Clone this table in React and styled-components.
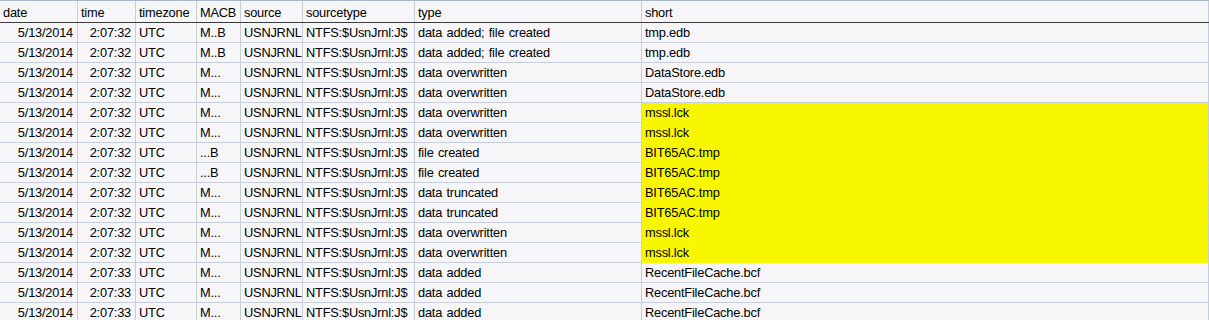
import React from 'react';
import styled, { createGlobalStyle } from 'styled-components';

const GlobalStyle = createGlobalStyle`
    html, body {
        margin:0;
        padding:0;
        background:#f6f6f8;
    }
`

const columns = [
    { key:'date', label:'date', width:78, align:'right' },
    { key:'time', label:'time', width:58, align:'right' },
    { key:'timezone', label:'timezone', width:61 },
    { key:'macb', label:'MACB', width:44 },
    { key:'source', label:'source', width:62 },
    { key:'sourcetype', label:'sourcetype', width:112 },
    { key:'type', label:'type', width:227 },
    { key:'short', label:'short', width:567 },
];

const makeRow = (time, macb, type, short, marked) => ({
    date:'5/13/2014',
    time,
    timezone:'UTC',
    macb,
    source:'USNJRNL',
    sourcetype:'NTFS:$UsnJrnl:J$',
    type,
    short,
    marked,
});

const rows = [
    makeRow('2:07:32', 'M..B', 'data added; file created', 'tmp.edb', false),
    makeRow('2:07:32', 'M..B', 'data added; file created', 'tmp.edb', false),
    makeRow('2:07:32', 'M...', 'data overwritten', 'DataStore.edb', false),
    makeRow('2:07:32', 'M...', 'data overwritten', 'DataStore.edb', false),
    makeRow('2:07:32', 'M...', 'data overwritten', 'mssl.lck', true),
    makeRow('2:07:32', 'M...', 'data overwritten', 'mssl.lck', true),
    makeRow('2:07:32', '...B', 'file created', 'BIT65AC.tmp', true),
    makeRow('2:07:32', '...B', 'file created', 'BIT65AC.tmp', true),
    makeRow('2:07:32', 'M...', 'data truncated', 'BIT65AC.tmp', true),
    makeRow('2:07:32', 'M...', 'data truncated', 'BIT65AC.tmp', true),
    makeRow('2:07:32', 'M...', 'data overwritten', 'mssl.lck', true),
    makeRow('2:07:32', 'M...', 'data overwritten', 'mssl.lck', true),
    makeRow('2:07:33', 'M...', 'data added', 'RecentFileCache.bcf', false),
    makeRow('2:07:33', 'M...', 'data added', 'RecentFileCache.bcf', false),
    makeRow('2:07:33', 'M...', 'data added', 'RecentFileCache.bcf', false),
];

const App = () => {
    return(
        <>
            <GlobalStyle/>
            <Sheet>
                <HeaderRow>
                    {columns.map((col) => (
                        <HeaderCell key={col.key}>{col.label}</HeaderCell>
                    ))}
                </HeaderRow>
                {rows.map((row, i) => (
                    <Row key={i}>
                        {columns.map((col) => (
                            <Cell
                                key={col.key}
                                align={col.align}
                                highlight={col.key === 'short' && row.marked}
                            >
                                {row[col.key]}
                            </Cell>
                        ))}
                    </Row>
                ))}
            </Sheet>
        </>
    )
}

export default App;

const gridTemplate = columns.map((c) => `${c.width}px`).join(' ');

const Sheet = styled.div`
    width:1209px;
    border-top:1px solid #a9b6c9;
    font-family:"Liberation Sans", Arial, sans-serif;
    font-size:12.8px;
    letter-spacing:-0.2px;
    word-spacing:1px;
    color:#000;
    background:#f6f6f8;
`
const Row = styled.div`
    display:grid;
    grid-template-columns:${gridTemplate};
    height:20px;
`
const HeaderRow = styled(Row)`
    height:21px;
    border-bottom:1px solid #3c3c3c;
`
const Cell = styled.div.withConfig({ shouldForwardProp: (p) => p !== 'highlight' && p !== 'align' })`
    box-sizing:border-box;
    display:flex;
    align-items:center;
    justify-content:${props => props.align === 'right' ? 'flex-end' : 'flex-start'};
    padding:${props => props.align === 'right' ? '0 4px 0 1px' : '0 0 0 3px'};
    border-right:1px solid #c6cedc;
    border-bottom:1px solid ${props => props.highlight ? '#f9f700' : '#c6cedc'};
    background:${props => props.highlight ? '#f9f700' : 'transparent'};
    white-space:nowrap;
    overflow:hidden;
    line-height:19px;
`
const HeaderCell = styled(Cell)`
    border-bottom:none;
    padding:2px 0 0 3px;
    justify-content:flex-start;
`
